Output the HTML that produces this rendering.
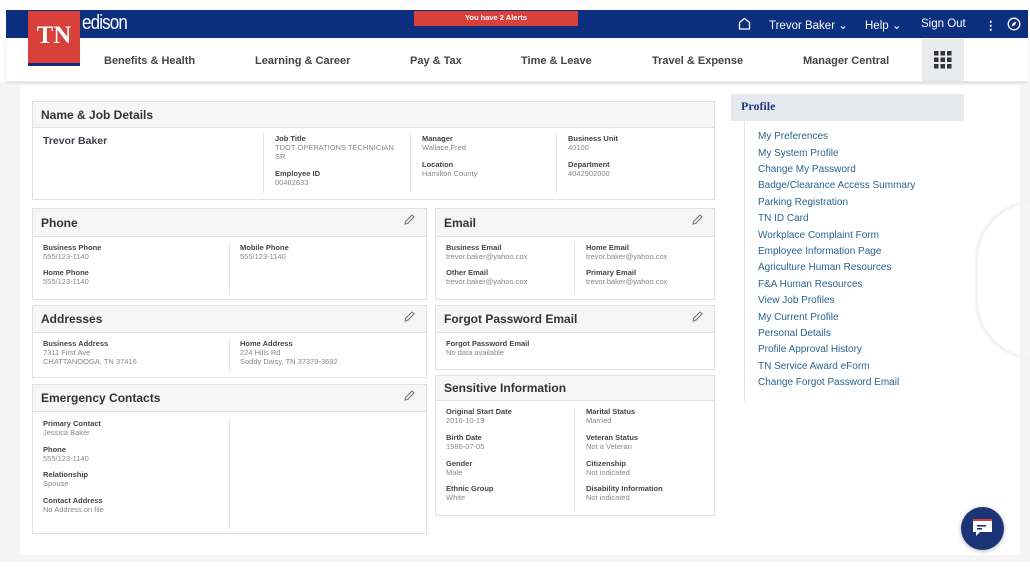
<!DOCTYPE html>
<html><head><meta charset="utf-8"><style>
*{margin:0;padding:0;box-sizing:border-box}
body{width:1030px;height:567px;overflow:hidden;background:#fff;font-family:"Liberation Sans",Arial,sans-serif;position:relative}
.a{position:absolute}
.bar{left:6px;top:10px;width:1022px;height:28px;background:#0d2f80}
.nav{left:6px;top:38px;width:1022px;height:43px;background:#fff;box-shadow:0 2px 3px rgba(0,0,0,.12)}
.navi{font-size:11px;font-weight:bold;color:#444;top:55px}
.top{color:#fff;font-size:11.5px;top:18px}
.card{position:absolute;background:#fff;border:1px solid #e1e1e1}
.hd{position:absolute;left:0;top:0;right:0;background:#f6f6f6;border-bottom:1px solid #e1e1e1;font-size:12px;font-weight:bold;color:#333;padding-left:8px}
.l{position:absolute;font-size:7.5px;font-weight:bold;color:#444;line-height:9px;white-space:nowrap}
.v{display:block;font-weight:normal;color:#888;font-size:7.5px}
.sep{position:absolute;width:1px;background:#e4e4e4}
.lk{position:absolute;left:758px;font-size:10px;color:#2a6491;white-space:nowrap}
</style></head><body>
<div class="a" style="left:0;top:82px;width:1030px;height:480px;background:#f5f5f6"></div>
<div class="a" style="left:20px;top:85px;width:1000px;height:470px;background:#fff"></div>
<div class="a" style="left:975px;top:200px;width:60px;height:160px;border-radius:80px 0 0 80px;border:3px solid #f2f2f4;border-right:none"></div>
<div class="a bar"></div>
<div class="a nav"></div>
<div class="a" style="left:28px;top:11px;width:52px;height:52px;background:#d9403a;color:#fff;font-family:'Liberation Serif',serif;font-size:25px;font-weight:bold;text-align:center;line-height:50px">TN</div>
<div class="a" style="left:28px;top:63px;width:52px;height:3px;background:#0d2f80"></div>
<div class="a" style="left:82px;top:12px;color:#fff;font-size:20px;letter-spacing:-1px;transform:scaleX(.85);transform-origin:left;font-weight:normal">edison</div>
<div class="a" style="left:414px;top:11px;width:164px;height:15px;background:#d9403a;color:#fff;font-size:7.5px;font-weight:bold;text-align:center;line-height:14px">You have 2 Alerts</div>
<svg class="a" style="left:738px;top:17px" width="13" height="13" viewBox="0 0 13 13"><path d="M1.5 12V5.5L6.5 1.5L11.5 5.5V12Z" fill="none" stroke="#fff" stroke-width="1.3"/></svg>
<div class="a top" style="left:769px">Trevor Baker ⌄</div>
<div class="a top" style="left:865px">Help ⌄</div>
<div class="a top" style="left:921px">Sign Out</div>
<div class="a top" style="left:985px;font-weight:bold">⋮</div>
<svg class="a" style="left:1007px;top:17px" width="14" height="14" viewBox="0 0 14 14"><circle cx="7" cy="7" r="5.8" fill="none" stroke="#fff" stroke-width="1.3"/><path d="M9.5 4.5L6 6L4.5 9.5L8 8Z" fill="#fff"/></svg>
<div class="a navi" style="left:104px">Benefits &amp; Health</div>
<div class="a navi" style="left:255px">Learning &amp; Career</div>
<div class="a navi" style="left:410px">Pay &amp; Tax</div>
<div class="a navi" style="left:521px">Time &amp; Leave</div>
<div class="a navi" style="left:652px">Travel &amp; Expense</div>
<div class="a navi" style="left:803px">Manager Central</div>
<div class="a" style="left:922px;top:39px;width:42px;height:42px;background:#e9ebef"></div>
<svg class="a" style="left:934px;top:51px" width="18" height="18" viewBox="0 0 18 18" fill="#333"><rect x="0" y="0" width="4.5" height="4.5"/><rect x="6.5" y="0" width="4.5" height="4.5"/><rect x="13" y="0" width="4.5" height="4.5"/><rect x="0" y="6.5" width="4.5" height="4.5"/><rect x="6.5" y="6.5" width="4.5" height="4.5"/><rect x="13" y="6.5" width="4.5" height="4.5"/><rect x="0" y="13" width="4.5" height="4.5"/><rect x="6.5" y="13" width="4.5" height="4.5"/><rect x="13" y="13" width="4.5" height="4.5"/></svg>

<div class="card" style="left:32px;top:101px;width:683px;height:99px"><div class="hd" style="height:26px;line-height:26px">Name &amp; Job Details</div></div>
<div class="a" style="left:43px;top:135px;font-size:10.5px;font-weight:bold;color:#3a3f4a">Trevor Baker</div>
<div class="sep" style="left:263px;top:133px;height:60px"></div>
<div class="sep" style="left:410px;top:133px;height:60px"></div>
<div class="sep" style="left:556px;top:133px;height:60px"></div>
<div class="l" style="left:275px;top:134px">Job Title<span class="v">TDOT OPERATIONS TECHNICIAN<br>SR</span></div>
<div class="l" style="left:275px;top:169px">Employee ID<span class="v">00462633</span></div>
<div class="l" style="left:422px;top:134px">Manager<span class="v">Wallace,Fred</span></div>
<div class="l" style="left:422px;top:160px">Location<span class="v">Hamilton County</span></div>
<div class="l" style="left:568px;top:134px">Business Unit<span class="v">40100</span></div>
<div class="l" style="left:568px;top:160px">Department<span class="v">4042902000</span></div>

<div class="card" style="left:32px;top:208px;width:395px;height:92px"><div class="hd" style="height:28px;line-height:28px">Phone</div></div>
<div class="sep" style="left:229px;top:243px;height:52px"></div>
<div class="l" style="left:43px;top:243px">Business Phone<span class="v">555/123-1140</span></div>
<div class="l" style="left:43px;top:268px">Home Phone<span class="v">555/123-1140</span></div>
<div class="l" style="left:240px;top:243px">Mobile Phone<span class="v">555/123-1140</span></div>

<div class="card" style="left:435px;top:208px;width:280px;height:92px"><div class="hd" style="height:28px;line-height:28px">Email</div></div>
<div class="sep" style="left:574px;top:243px;height:50px"></div>
<div class="l" style="left:446px;top:243px">Business Email<span class="v">trevor.baker@yahoo.cox</span></div>
<div class="l" style="left:446px;top:268px">Other Email<span class="v">trevor.baker@yahoo.cox</span></div>
<div class="l" style="left:586px;top:243px">Home Email<span class="v">trevor.baker@yahoo.cox</span></div>
<div class="l" style="left:586px;top:268px">Primary Email<span class="v">trevor.baker@yahoo.cox</span></div>

<div class="card" style="left:32px;top:305px;width:395px;height:73px"><div class="hd" style="height:27px;line-height:27px">Addresses</div></div>
<div class="sep" style="left:229px;top:339px;height:33px"></div>
<div class="l" style="left:43px;top:339px">Business Address<span class="v">7311 First Ave<br>CHATTANOOGA, TN 37416</span></div>
<div class="l" style="left:240px;top:339px">Home Address<span class="v">224 Hills Rd<br>Soddy Daisy, TN 37379-3692</span></div>

<div class="card" style="left:32px;top:384px;width:395px;height:150px"><div class="hd" style="height:27px;line-height:27px">Emergency Contacts</div></div>
<div class="sep" style="left:229px;top:419px;height:110px"></div>
<div class="l" style="left:43px;top:419px">Primary Contact<span class="v">Jessica Baker</span></div>
<div class="l" style="left:43px;top:445px">Phone<span class="v">555/123-1140</span></div>
<div class="l" style="left:43px;top:470px">Relationship<span class="v">Spouse</span></div>
<div class="l" style="left:43px;top:496px">Contact Address<span class="v">No Address on file</span></div>

<div class="card" style="left:435px;top:305px;width:280px;height:65px"><div class="hd" style="height:27px;line-height:27px">Forgot Password Email</div></div>
<div class="l" style="left:446px;top:339px">Forgot Password Email<span class="v">No data available</span></div>

<div class="card" style="left:435px;top:375px;width:280px;height:141px"><div class="hd" style="height:25px;line-height:25px">Sensitive Information</div></div>
<div class="sep" style="left:574px;top:408px;height:102px"></div>
<div class="l" style="left:446px;top:407px">Original Start Date<span class="v">2016-10-19</span></div>
<div class="l" style="left:446px;top:433px">Birth Date<span class="v">1986-07-05</span></div>
<div class="l" style="left:446px;top:459px">Gender<span class="v">Male</span></div>
<div class="l" style="left:446px;top:484px">Ethnic Group<span class="v">White</span></div>
<div class="l" style="left:586px;top:407px">Marital Status<span class="v">Married</span></div>
<div class="l" style="left:586px;top:433px">Veteran Status<span class="v">Not a Veteran</span></div>
<div class="l" style="left:586px;top:459px">Citizenship<span class="v">Not indicated</span></div>
<div class="l" style="left:586px;top:484px">Disability Information<span class="v">Not indicated</span></div>

<svg class="a" style="left:403px;top:213px" width="13" height="13" viewBox="0 0 13 13"><path d="M2 11L2.5 8.5L9 2L11 4L4.5 10.5Z" fill="none" stroke="#777" stroke-width="1.1"/></svg>
<svg class="a" style="left:691px;top:213px" width="13" height="13" viewBox="0 0 13 13"><path d="M2 11L2.5 8.5L9 2L11 4L4.5 10.5Z" fill="none" stroke="#777" stroke-width="1.1"/></svg>
<svg class="a" style="left:403px;top:310px" width="13" height="13" viewBox="0 0 13 13"><path d="M2 11L2.5 8.5L9 2L11 4L4.5 10.5Z" fill="none" stroke="#777" stroke-width="1.1"/></svg>
<svg class="a" style="left:691px;top:310px" width="13" height="13" viewBox="0 0 13 13"><path d="M2 11L2.5 8.5L9 2L11 4L4.5 10.5Z" fill="none" stroke="#777" stroke-width="1.1"/></svg>
<svg class="a" style="left:403px;top:389px" width="13" height="13" viewBox="0 0 13 13"><path d="M2 11L2.5 8.5L9 2L11 4L4.5 10.5Z" fill="none" stroke="#777" stroke-width="1.1"/></svg>

<div class="a" style="left:731px;top:94px;width:233px;height:27px;background:#e6e9ee;font-family:'Liberation Serif',serif;font-weight:bold;font-size:12px;color:#1d3a7a;padding-left:10px;line-height:25px">Profile</div>
<div class="a" style="left:744px;top:121px;width:1px;height:280px;background:#e2e2e2"></div>
<div class="lk" style="top:131px">My Preferences</div>
<div class="lk" style="top:148px">My System Profile</div>
<div class="lk" style="top:164px">Change My Password</div>
<div class="lk" style="top:180px">Badge/Clearance Access Summary</div>
<div class="lk" style="top:197px">Parking Registration</div>
<div class="lk" style="top:213px">TN ID Card</div>
<div class="lk" style="top:230px">Workplace Complaint Form</div>
<div class="lk" style="top:246px">Employee Information Page</div>
<div class="lk" style="top:262px">Agriculture Human Resources</div>
<div class="lk" style="top:279px">F&amp;A Human Resources</div>
<div class="lk" style="top:295px">View Job Profiles</div>
<div class="lk" style="top:312px">My Current Profile</div>
<div class="lk" style="top:328px">Personal Details</div>
<div class="lk" style="top:344px">Profile Approval History</div>
<div class="lk" style="top:361px">TN Service Award eForm</div>
<div class="lk" style="top:377px">Change Forgot Password Email</div>

<div class="a" style="left:961px;top:507px;width:43px;height:43px;border-radius:50%;background:#1c3477;box-shadow:0 1px 4px rgba(0,0,0,.3)"></div>
<svg class="a" style="left:972px;top:518px" width="21" height="20" viewBox="0 0 21 20"><path d="M1 2H20V14H8L4 18V14H1Z" fill="#fff"/><rect x="1" y="1" width="19" height="2" fill="#d9403a"/><rect x="5" y="7" width="9" height="1.6" fill="#1c3477"/><rect x="5" y="10" width="5" height="1.6" fill="#1c3477"/></svg>
</body></html>
